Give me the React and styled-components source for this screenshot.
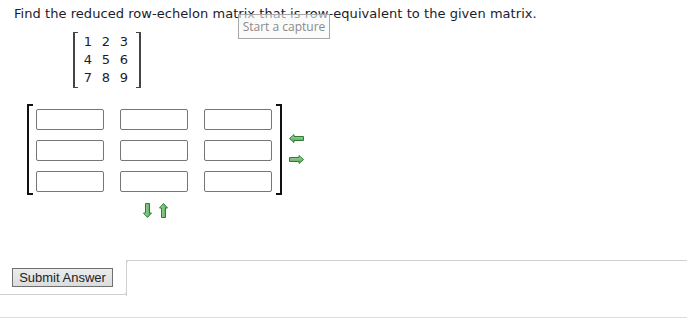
import React from 'react'
import styled, { createGlobalStyle } from 'styled-components'

const Global = createGlobalStyle`
  html, body { margin: 0; padding: 0; background: #fff; }
  body { font-family: Verdana, "DejaVu Sans", sans-serif; color: #222; }
`;

const Page = styled.div`
  width: 687px;
  height: 318px;
  position: relative;
  overflow: hidden;
`;

const Question = styled.p`
  margin: 0;
  padding: 6px 0 0 14px;
  font-size: 13px;
  line-height: 16px;
  letter-spacing: 0.05px;
  color: #1b1b2b;
`;

const Tooltip = styled.div`
  position: absolute;
  left: 238px;
  top: 14px;
  width: 92px;
  height: 25px;
  box-sizing: border-box;
  border: 1px solid #a8a8a8;
  background: rgba(248, 248, 248, 0.6);
  color: #8a8a8a;
  font-family: "Open Sans", "DejaVu Sans", sans-serif;
  font-size: 12px;
  line-height: 23px;
  text-align: center;
`;

const Matrix = styled.div`
  display: flex;
  width: fit-content;
  align-items: stretch;
  margin: ${p => p.$margin};
`;

const Bracket = styled.span`
  width: ${p => p.$tick}px;
  box-sizing: border-box;
  border: 2px solid ${p => p.$color};
  ${p => (p.$side === 'left' ? 'border-right: none;' : 'border-left: none;')}
  border-top-width: ${p => p.$thin}px;
  border-bottom-width: ${p => p.$thin}px;
`;

const NumberGrid = styled.div`
  display: grid;
  grid-template-columns: repeat(3, 18px);
  grid-auto-rows: 18px;
  padding: 1px 3px 1px 1px;
  font-size: 13px;
  line-height: 18px;
  text-align: center;
  color: #1b1b2b;
`;

const InputGrid = styled.div`
  display: grid;
  grid-template-columns: repeat(3, 68px);
  grid-auto-rows: 21px;
  column-gap: 16px;
  row-gap: 10px;
  padding: 5px 4px 3px 3px;
`;

const Cell = styled.input`
  width: 68px;
  height: 21px;
  box-sizing: border-box;
  border: 1px solid #767676;
  border-radius: 2px;
  margin: 0;
  padding: 0 3px;
  background: #fff;
`;

const MatrixRow = styled.div`
  display: flex;
  align-items: center;
  margin: 16px 0 0 27px;
`;

const SideArrows = styled.div`
  display: flex;
  flex-direction: column;
  gap: 12px;
  margin-left: 7px;
  margin-top: -2px;
`;

const BottomArrows = styled.div`
  display: flex;
  gap: 7px;
  height: 15px;
  margin: 8px 0 0 143px;
`;

const Footer = styled.div`
  display: flex;
  margin-top: 42px;
`;

const ButtonCell = styled.div`
  width: 127px;
  height: 35px;
  box-sizing: border-box;
  border-right: 1px solid #cfcfcf;
  border-bottom: 1px solid #cfcfcf;
  border-bottom-right-radius: 3px;
  padding: 8px 0 0 12px;
`;

const RestCell = styled.div`
  flex: 1;
  height: 35px;
  border-top: 1px solid #cfcfcf;
  border-top-left-radius: 3px;
  margin-left: -1px;
  border-left: 1px solid #cfcfcf;
`;

const Submit = styled.button`
  display: block;
  width: 101px;
  height: 19px;
  box-sizing: border-box;
  padding: 0;
  border: 1px solid #707070;
  background: linear-gradient(#ececec, #dcdcdc);
  font-family: "Liberation Sans", Arial, sans-serif;
  font-size: 13px;
  line-height: 17px;
  color: #222;
`;

const BottomLine = styled.div`
  margin-top: 21px;
  height: 2px;
  border-top: 1px solid #dedede;
  background: #f4f4f4;
`;

const Grad = () => (
  <defs>
    <linearGradient id="gh" x1="0" y1="0" x2="0" y2="1">
      <stop offset="0" stopColor="#a6dca6" />
      <stop offset="1" stopColor="#4ea64e" />
    </linearGradient>
    <linearGradient id="gv" x1="0" y1="0" x2="1" y2="0">
      <stop offset="0" stopColor="#a6dca6" />
      <stop offset="1" stopColor="#4ea64e" />
    </linearGradient>
  </defs>
);

const ArrowH = ({ dir }) => (
  <svg width="15" height="9" viewBox="0 0 15 9" style={{ display: 'block' }}>
    <Grad />
    <path
      d="M0.5 4.5 L5 0.5 L5 2.5 L14.5 2.5 L14.5 6.5 L5 6.5 L5 8.5 Z"
      fill="url(#gh)"
      stroke="#2f7d34"
      strokeWidth="1"
      transform={dir === 'right' ? 'translate(15 0) scale(-1 1)' : undefined}
    />
  </svg>
);

const ArrowV = ({ dir }) => (
  <svg width="9" height="15" viewBox="0 0 9 15" style={{ display: 'block' }}>
    <Grad />
    <path
      d="M4.5 0.5 L8.5 5 L6.5 5 L6.5 14.5 L2.5 14.5 L2.5 5 L0.5 5 Z"
      fill="url(#gv)"
      stroke="#2f7d34"
      strokeWidth="1"
      transform={dir === 'down' ? 'translate(0 15) scale(1 -1)' : undefined}
    />
  </svg>
);

const given = [1, 2, 3, 4, 5, 6, 7, 8, 9];

export default function App() {
  return (
    <Page>
      <Global />
      <Question>Find the reduced row-echelon matrix that is row-equivalent to the given matrix.</Question>
      <Tooltip>Start a capture</Tooltip>
      <Matrix $margin="10px 0 0 73px">
        <Bracket $side="left" $tick={5} $thin={1} $color="#444" />
        <NumberGrid>
          {given.map(n => <span key={n}>{n}</span>)}
        </NumberGrid>
        <Bracket $side="right" $tick={5} $thin={1} $color="#444" />
      </Matrix>
      <MatrixRow>
        <Matrix $margin="0">
          <Bracket $side="left" $tick={6} $thin={2} $color="#111" />
          <InputGrid>
            {given.map(n => <Cell key={n} />)}
          </InputGrid>
          <Bracket $side="right" $tick={6} $thin={2} $color="#111" />
        </Matrix>
        <SideArrows>
          <ArrowH dir="left" />
          <ArrowH dir="right" />
        </SideArrows>
      </MatrixRow>
      <BottomArrows>
        <ArrowV dir="down" />
        <ArrowV dir="up" />
      </BottomArrows>
      <Footer>
        <ButtonCell>
          <Submit>Submit Answer</Submit>
        </ButtonCell>
        <RestCell />
      </Footer>
      <BottomLine />
    </Page>
  );
}
